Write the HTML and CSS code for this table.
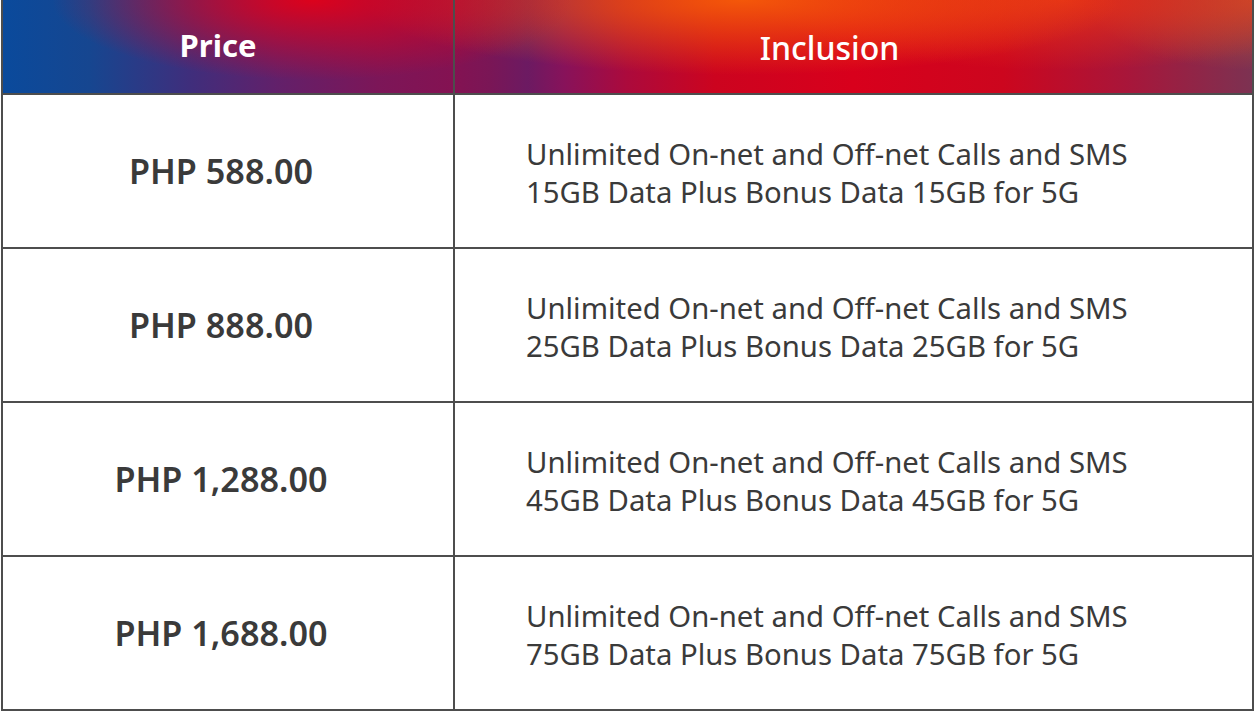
FILE: index.html
```html
<!DOCTYPE html>
<html lang="en">
<head>
<meta charset="utf-8">
<title>Plans</title>
<link rel="stylesheet" href="styles.css">
</head>
<body>
<table class="plans">
  <thead>
    <tr class="head-row">
      <th class="col-price">Price</th>
      <th class="col-incl">Inclusion</th>
    </tr>
  </thead>
  <tbody>
    <tr>
      <td class="price">PHP 588.00</td>
      <td class="incl">Unlimited On-net and Off-net Calls and SMS<br>15GB Data Plus Bonus Data 15GB for 5G</td>
    </tr>
    <tr>
      <td class="price">PHP 888.00</td>
      <td class="incl">Unlimited On-net and Off-net Calls and SMS<br>25GB Data Plus Bonus Data 25GB for 5G</td>
    </tr>
    <tr>
      <td class="price">PHP 1,288.00</td>
      <td class="incl">Unlimited On-net and Off-net Calls and SMS<br>45GB Data Plus Bonus Data 45GB for 5G</td>
    </tr>
    <tr>
      <td class="price">PHP 1,688.00</td>
      <td class="incl">Unlimited On-net and Off-net Calls and SMS<br>75GB Data Plus Bonus Data 75GB for 5G</td>
    </tr>
  </tbody>
</table>
</body>
</html>
```
FILE: styles.css
```css
html, body {
  margin: 0;
  padding: 0;
  background: #ffffff;
}
body {
  font-family: "Noto Sans", "Open Sans", sans-serif;
  color: #3a3a3a;
}
.plans {
  width: 1253px;
  margin-left: 1px;
  border-collapse: collapse;
  table-layout: fixed;
}
.plans th,
.plans td {
  box-sizing: border-box;
  border: 2px solid #4d4d4d;
  padding: 0;
}
.plans thead th {
  border-top: none;
}
.col-price { width: 452px; }
.head-row {
  height: 94px;
  background:
    radial-gradient(ellipse 260px 80px at 310px 0px, rgba(226,0,24,0.95), rgba(226,0,24,0) 100%),
    radial-gradient(ellipse 380px 75px at 740px 0px, rgba(246,92,8,0.95), rgba(246,92,8,0) 100%),
    radial-gradient(ellipse 300px 70px at 1060px 0px, rgba(232,50,22,0.9), rgba(232,50,22,0) 100%),
    radial-gradient(ellipse 170px 70px at 1254px 0px, rgba(200,80,45,0.9), rgba(200,80,45,0) 100%),
    linear-gradient(90deg, #0a4a9c 0%, #164690 7%, #3f2e7c 15%, #62206a 22%, #7c1658 30%, #841252 36%, #7a1656 39%, #6c1a62 42%, #88125a 45%, #ac0a3c 50%, #cc041f 57%, #d8001c 68%, #cc061e 80%, #a8163a 90%, #7c3252 100%);
}
.plans th {
  color: #ffffff;
  text-align: center;
  vertical-align: middle;
}
.col-price {
  font-size: 31px;
  font-weight: 700;
  padding-bottom: 4px !important;
  padding-right: 20px !important;
}
.col-incl {
  font-size: 32px;
  font-weight: 500;
  padding-top: 2px !important;
  padding-right: 48px !important;
}
.plans tbody tr {
  height: 154px;
}
.price {
  text-align: center;
  font-size: 34.2px;
  font-weight: 600;
  color: #3a3a3a;
  padding-bottom: 2px !important;
  padding-right: 14px !important;
}
.incl {
  font-size: 29.3px;
  line-height: 38px;
  color: #3a3a3a;
  padding-left: 71px !important;
  padding-top: 4px !important;
}
```
